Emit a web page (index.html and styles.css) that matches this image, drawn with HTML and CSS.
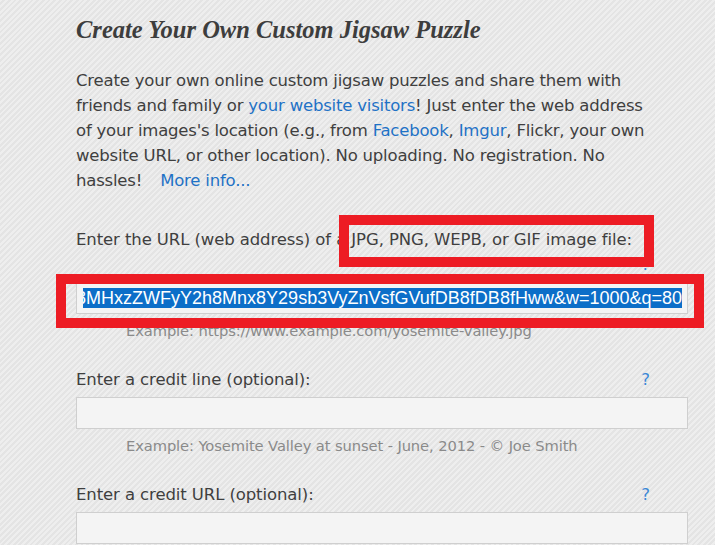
FILE: index.html
```html
<!DOCTYPE html>
<html lang="en">
<head>
    <meta charset="UTF-8">
    <meta name="viewport" content="width=device-width, initial-scale=1.0">
    <title>Create Your Own Custom Jigsaw Puzzle</title>
    <link rel="stylesheet" href="styles.css">
</head>
<body>
    <div class="page">
        <h1 class="title">Create Your Own Custom Jigsaw Puzzle</h1>

        <p class="intro">
            Create your own online custom jigsaw puzzles and share them with
            friends and family or <a href="#">your website visitors</a>! Just enter the web address
            of your images's location (e.g., from <a href="#">Facebook</a>, <a href="#">Imgur</a>, Flickr, your own
            website URL, or other location). No uploading. No registration. No
            hassles! <a href="#" class="more">More info...</a>
        </p>

        <div class="field">
            <div class="field-head stacked">
                <label for="image-url">Enter the URL (web address) of a JPG, PNG, WEPB, or GIF image file:</label>
                <a href="#" class="help">?</a>
            </div>
            <!-- campo com o texto selecionado, rolado ate o fim -->
            <div class="input" id="image-url">
                <div class="input-scroll">
                    <span class="selection">M3wxMjA3fDB8MHxzZWFyY2h8Mnx8Y29sb3VyZnVsfGVufDB8fDB8fHww&amp;w=1000&amp;q=80</span>
                </div>
            </div>
            <div class="example">Example: https://www.example.com/yosemite-valley.jpg</div>
        </div>

        <div class="field">
            <div class="field-head">
                <label for="credit-line">Enter a credit line (optional):</label>
                <a href="#" class="help">?</a>
            </div>
            <div class="input" id="credit-line"></div>
            <div class="example">Example: Yosemite Valley at sunset - June, 2012 - &copy; Joe Smith</div>
        </div>

        <div class="field">
            <div class="field-head">
                <label for="credit-url">Enter a credit URL (optional):</label>
                <a href="#" class="help">?</a>
            </div>
            <div class="input" id="credit-url"></div>
        </div>

        <!-- marcacoes vermelhas da captura -->
        <div class="mark mark-type"></div>
        <div class="mark mark-url"></div>
    </div>
</body>
</html>
```

FILE: styles.css
```css
html, body {
    height: 100%;
}
body {
    margin: 0;
    font-family: "DejaVu Sans", sans-serif;
    font-size: 16.5px;
    letter-spacing: -0.1px;
    color: #3f3f3f;
    background-color: #ebebeb;
    background-image: repeating-linear-gradient(135deg, #eeeeee 0 2px, #e4e4e4 2px 4px);
    overflow: hidden;
}
a {
    color: #1f72c6;
    text-decoration: none;
}
.page {
    position: relative;
    padding: 12px 0 0 76px;
    width: 612px;
}
.title {
    margin: 0;
    font-family: "Liberation Serif", serif;
    font-style: italic;
    font-weight: bold;
    font-size: 24.5px;
    line-height: 36px;
    letter-spacing: 0;
    color: #3d3d3d;
}
.intro {
    margin: 20px 0 0;
    line-height: 25px;
    letter-spacing: -0.2px;
    width: 580px;
}
.intro .more {
    margin-left: 13px;
}
.field {
    margin-top: 34px;
}
.field + .field {
    margin-top: 26px;
}
.field-head {
    display: flex;
    justify-content: space-between;
    line-height: 25px;
    padding-right: 38px;
}
.field-head.stacked {
    flex-wrap: wrap;
}
.field-head.stacked label {
    flex: 1 0 100%;
}
.help {
    margin-left: auto;
    color: #3a87d6;
}
.input {
    margin-top: 5px;
    height: 30px;
    border: 1px solid #cfcfcf;
    background-color: #f4f4f4;
    padding: 0 5px 0 6px;
}
.input-scroll {
    height: 100%;
    overflow: hidden;
    display: flex;
    align-items: center;
    justify-content: flex-end;
    white-space: nowrap;
}
.selection {
    font-family: "Liberation Sans", Arial, sans-serif;
    font-size: 18px;
    line-height: 20px;
    letter-spacing: 0;
    background-color: #0c6ec8;
    color: #fff;
}
.example {
    margin-top: 7px;
    padding-left: 50px;
    font-size: 14.7px;
    line-height: 20px;
    color: #8a8a8a;
}

/* marcacoes vermelhas */
.mark {
    position: absolute;
    border: 10px solid #ed1c24;
    box-sizing: border-box;
}
.mark-type {
    left: 339px;
    top: 215px;
    width: 315px;
    height: 52px;
}
.mark-url {
    left: 56px;
    top: 274px;
    width: 648px;
    height: 54px;
}
```
